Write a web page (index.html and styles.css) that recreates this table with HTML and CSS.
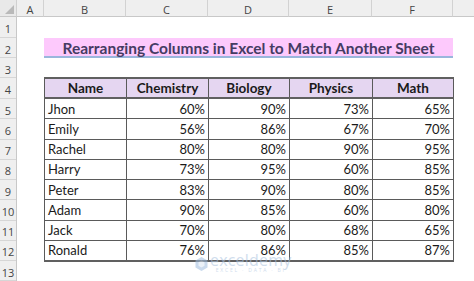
FILE: index.html
```html
<!DOCTYPE html>
<html>
<head>
<meta charset="utf-8">
<link rel="stylesheet" href="styles.css">
</head>
<body>
<div class="sheet">
  <div class="corner"><span class="tri"></span></div>
  <div class="colh">A</div>
  <div class="colh">B</div>
  <div class="colh">C</div>
  <div class="colh">D</div>
  <div class="colh">E</div>
  <div class="colh">F</div>
  <div class="colh last"></div>

  <div class="rownums">
    <div class="rn r1">1</div>
    <div class="rn">2</div>
    <div class="rn">3</div>
    <div class="rn r4">4</div>
    <div class="rn rd">5</div>
    <div class="rn rd">6</div>
    <div class="rn rd">7</div>
    <div class="rn rd">8</div>
    <div class="rn rd">9</div>
    <div class="rn rd">10</div>
    <div class="rn rd">11</div>
    <div class="rn rd">12</div>
    <div class="rn">13</div>
  </div>

  <div class="area">
    <div class="spacer-r1"></div>
    <div class="title">Rearranging Columns in Excel to Match Another Sheet</div>
    <div class="spacer-r3"></div>
    <table class="data">
      <colgroup>
        <col class="c82"><col class="c82"><col class="c81"><col class="c83"><col class="c81">
      </colgroup>
      <thead>
        <tr><th>Name</th><th>Chemistry</th><th>Biology</th><th>Physics</th><th>Math</th></tr>
      </thead>
      <tbody>
        <tr><td class="nm">Jhon</td><td>60%</td><td>90%</td><td>73%</td><td>65%</td></tr>
        <tr><td class="nm">Emily</td><td>56%</td><td>86%</td><td>67%</td><td>70%</td></tr>
        <tr><td class="nm">Rachel</td><td>80%</td><td>80%</td><td>90%</td><td>95%</td></tr>
        <tr><td class="nm">Harry</td><td>73%</td><td>95%</td><td>60%</td><td>85%</td></tr>
        <tr><td class="nm">Peter</td><td>83%</td><td>90%</td><td>80%</td><td>85%</td></tr>
        <tr><td class="nm">Adam</td><td>90%</td><td>85%</td><td>60%</td><td>80%</td></tr>
        <tr><td class="nm">Jack</td><td>70%</td><td>80%</td><td>68%</td><td>65%</td></tr>
        <tr><td class="nm">Ronald</td><td>76%</td><td>86%</td><td>85%</td><td>87%</td></tr>
      </tbody>
    </table>
    <div class="watermark">
      <svg class="wm-logo" width="15" height="16" viewBox="0 0 15 16">
        <path d="M7.5 1 L13.5 4.5 L13.5 11.5 L7.5 15 L1.5 11.5 L1.5 4.5 Z" fill="#9fbde0"/>
        <path d="M7.5 4.5 L10.5 6.3 L10.5 9.7 L7.5 11.5 L4.5 9.7 L4.5 6.3 Z" fill="#dbe7f4"/>
      </svg>
      <div class="wm-text">
        <div class="wm-name">exceldemy</div>
        <div class="wm-sub">EXCEL · DATA · BI</div>
      </div>
    </div>
  </div>
</div>
</body>
</html>
```

FILE: styles.css
```css
html, body {
  margin: 0;
  padding: 0;
  background: #ffffff;
}

body {
  width: 474px;
  height: 281px;
  overflow: hidden;
  font-family: Lato, "Open Sans", "Liberation Sans", sans-serif;
}

.sheet {
  display: grid;
  grid-template-columns: 17px 27px 82px 82px 81px 83px 81px 21px;
  grid-template-rows: 17px 264px;
  width: 474px;
  height: 281px;
}

.corner {
  background: #e9e9e9;
  border-right: 1px solid #d0d0d0;
  border-bottom: 1px solid #c8c8c8;
  box-sizing: border-box;
  position: relative;
}

.tri {
  position: absolute;
  right: 2px;
  bottom: 2px;
  width: 0;
  height: 0;
  border-left: 9px solid transparent;
  border-bottom: 9px solid #b9b9b9;
}

.colh {
  background: #efefef;
  border-right: 1px solid #d2d2d2;
  border-bottom: 1px solid #c8c8c8;
  box-sizing: border-box;
  display: flex;
  align-items: center;
  justify-content: center;
  padding-top: 2px;
  font-size: 11px;
  color: #444444;
  font-family: "Open Sans", "Liberation Sans", sans-serif;
}

.colh.last {
  border-right: none;
}

.rownums {
  display: flex;
  flex-direction: column;
  background: #efefef;
  border-right: 1px solid #c8c8c8;
  box-sizing: border-box;
}

.rn {
  height: 20px;
  flex: none;
  box-sizing: border-box;
  border-bottom: 1px solid #d6d6d6;
  display: flex;
  align-items: center;
  justify-content: center;
  padding-top: 3px;
  font-size: 11px;
  color: #444444;
  font-family: "Open Sans", "Liberation Sans", sans-serif;
}

.rn.r1 { height: 21px; }
.rn.r4 { height: 21px; }
.rn.rd { height: 20.25px; }

.area {
  grid-column: 2 / 9;
  grid-row: 2;
  display: flex;
  flex-direction: column;
  padding-left: 27px;
  position: relative;
}

.spacer-r1 { height: 21px; flex: none; }
.spacer-r3 { height: 19px; flex: none; }

.title {
  width: 409px;
  height: 20px;
  box-sizing: border-box;
  background: #fdc9fc;
  border-bottom: 2px solid #9ab6dc;
  color: #453b63;
  font-weight: bold;
  font-size: 15.5px;
  display: flex;
  align-items: center;
  justify-content: center;
  padding-top: 1px;
  flex: none;
}

.data {
  border-collapse: collapse;
  table-layout: fixed;
  width: 409px;
  font-size: 13px;
  color: #1a1a1a;
}

.c82 { width: 82px; }
.c81 { width: 81px; }
.c83 { width: 83px; }

.data th,
.data td {
  border: 1px solid #5a5a5a;
  padding: 0 3px;
  white-space: nowrap;
  overflow: hidden;
}

.data th {
  background: #e5d6f1;
  height: 18px;
  font-weight: bold;
  font-size: 13.5px;
  line-height: 16px;
  text-align: center;
  border-top: 2px solid #606060;
  border-bottom: 2px solid #606060;
}

.data td {
  height: 19.25px;
  text-align: right;
  line-height: 14px;
}

.data td.nm {
  text-align: left;
}

.data tbody tr:last-child td {
  border-bottom: 2px solid #606060;
}

.watermark {
  position: absolute;
  left: 177px;
  top: 236px;
  display: flex;
  align-items: center;
  gap: 1px;
  opacity: 0.55;
}

.wm-name {
  font-family: "Open Sans", "Liberation Sans", sans-serif;
  font-size: 16px;
  line-height: 14px;
  color: #aac3e0;
  letter-spacing: 0.2px;
}

.wm-sub {
  font-family: "Open Sans", "Liberation Sans", sans-serif;
  font-size: 5px;
  line-height: 7px;
  color: #aac3e0;
  letter-spacing: 1.8px;
  text-align: center;
}
```
